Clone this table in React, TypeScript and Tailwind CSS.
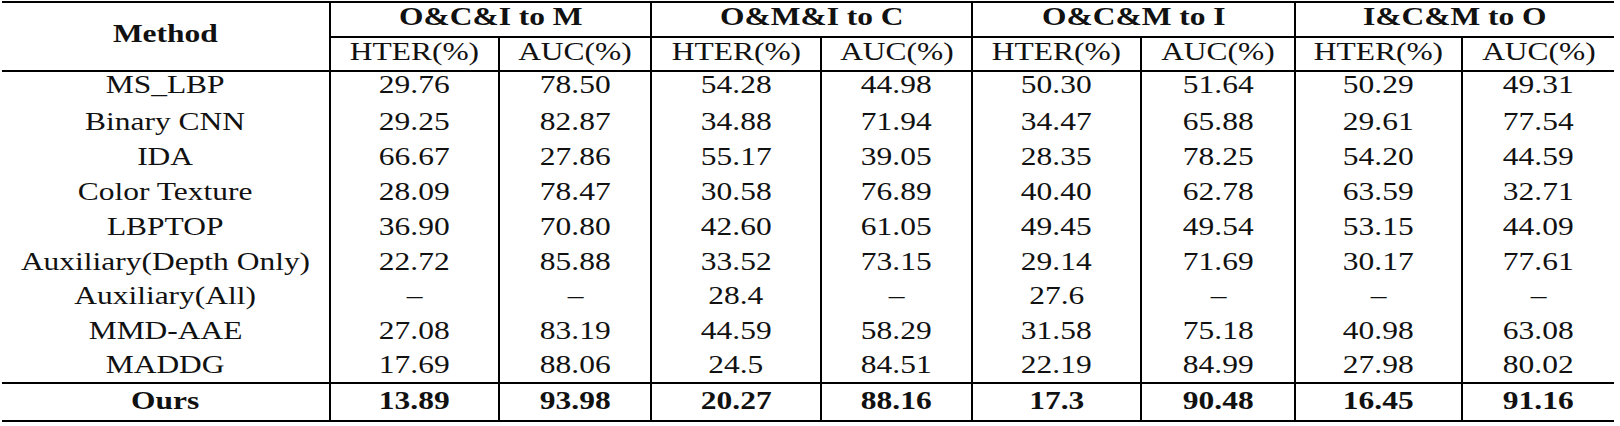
import React from "react";

const groups = ["O&C&I to M", "O&M&I to C", "O&C&M to I", "I&C&M to O"];

const rows: [string, string[]][] = [
  ["MS_LBP", ["29.76", "78.50", "54.28", "44.98", "50.30", "51.64", "50.29", "49.31"]],
  ["Binary CNN", ["29.25", "82.87", "34.88", "71.94", "34.47", "65.88", "29.61", "77.54"]],
  ["IDA", ["66.67", "27.86", "55.17", "39.05", "28.35", "78.25", "54.20", "44.59"]],
  ["Color Texture", ["28.09", "78.47", "30.58", "76.89", "40.40", "62.78", "63.59", "32.71"]],
  ["LBPTOP", ["36.90", "70.80", "42.60", "61.05", "49.45", "49.54", "53.15", "44.09"]],
  ["Auxiliary(Depth Only)", ["22.72", "85.88", "33.52", "73.15", "29.14", "71.69", "30.17", "77.61"]],
  ["Auxiliary(All)", ["–", "–", "28.4", "–", "27.6", "–", "–", "–"]],
  ["MMD-AAE", ["27.08", "83.19", "44.59", "58.29", "31.58", "75.18", "40.98", "63.08"]],
  ["MADDG", ["17.69", "88.06", "24.5", "84.51", "22.19", "84.99", "27.98", "80.02"]],
];

const ours = ["13.89", "93.98", "20.27", "88.16", "17.3", "90.48", "16.45", "91.16"];

// text in the source image is stretched horizontally
const T = ({ children, bold }: { children: React.ReactNode; bold?: boolean }) => (
  <span className={`inline-block scale-x-[1.21] whitespace-nowrap ${bold ? "font-bold" : ""}`}>{children}</span>
);

const cell = "flex items-center justify-center border-black";

export default function App() {
  return (
    <div className="w-[1620px] h-[426px] bg-white pt-[1px] font-['Liberation_Serif','Times_New_Roman',serif] text-[26px] leading-none text-[#111]">
      <div className="ml-[2px] w-[1612px] grid grid-cols-[329px_169px_152px_170px_151px_169px_154px_167px_151px] grid-rows-[35px_34px_repeat(9,34.67px)_36px] border-t-2 border-b-2 border-black">
        <div className={`${cell} row-span-2 border-r-2 border-b-2 pb-[5px]`}>
          <T bold>Method</T>
        </div>
        {groups.map((g, i) => (
          <div key={g} className={`${cell} col-span-2 border-b-2 pb-[6px] ${i < 3 ? "border-r-2" : ""}`}>
            <T bold>{g}</T>
          </div>
        ))}
        {groups.flatMap((g, i) => [
          <div key={g + "h"} className={`${cell} border-b-2 border-r-2 pb-[4px]`}>
            <T>HTER(%)</T>
          </div>,
          <div key={g + "a"} className={`${cell} border-b-2 pb-[4px] ${i < 3 ? "border-r-2" : ""}`}>
            <T>AUC(%)</T>
          </div>,
        ])}
        {rows.map(([name, vals], r) => {
          const last = r === rows.length - 1 ? "border-b-2" : "";
          const pad = r === 0 ? "pb-[8px]" : r < 3 ? "pb-[4px]" : "pb-[2px]";
          return (
            <React.Fragment key={name}>
              <div className={`${cell} border-r-2 ${last} ${pad}`}>
                <T>{name}</T>
              </div>
              {vals.map((v, i) => (
                <div key={i} className={`${cell} ${last} ${pad} ${i < 7 ? "border-r-2" : ""}`}>
                  <T>{v}</T>
                </div>
              ))}
            </React.Fragment>
          );
        })}
        <div className={`${cell} border-r-2 pb-[2px]`}>
          <T bold>Ours</T>
        </div>
        {ours.map((v, i) => (
          <div key={i} className={`${cell} pb-[2px] ${i < 7 ? "border-r-2" : ""}`}>
            <T bold>{v}</T>
          </div>
        ))}
      </div>
    </div>
  );
}
